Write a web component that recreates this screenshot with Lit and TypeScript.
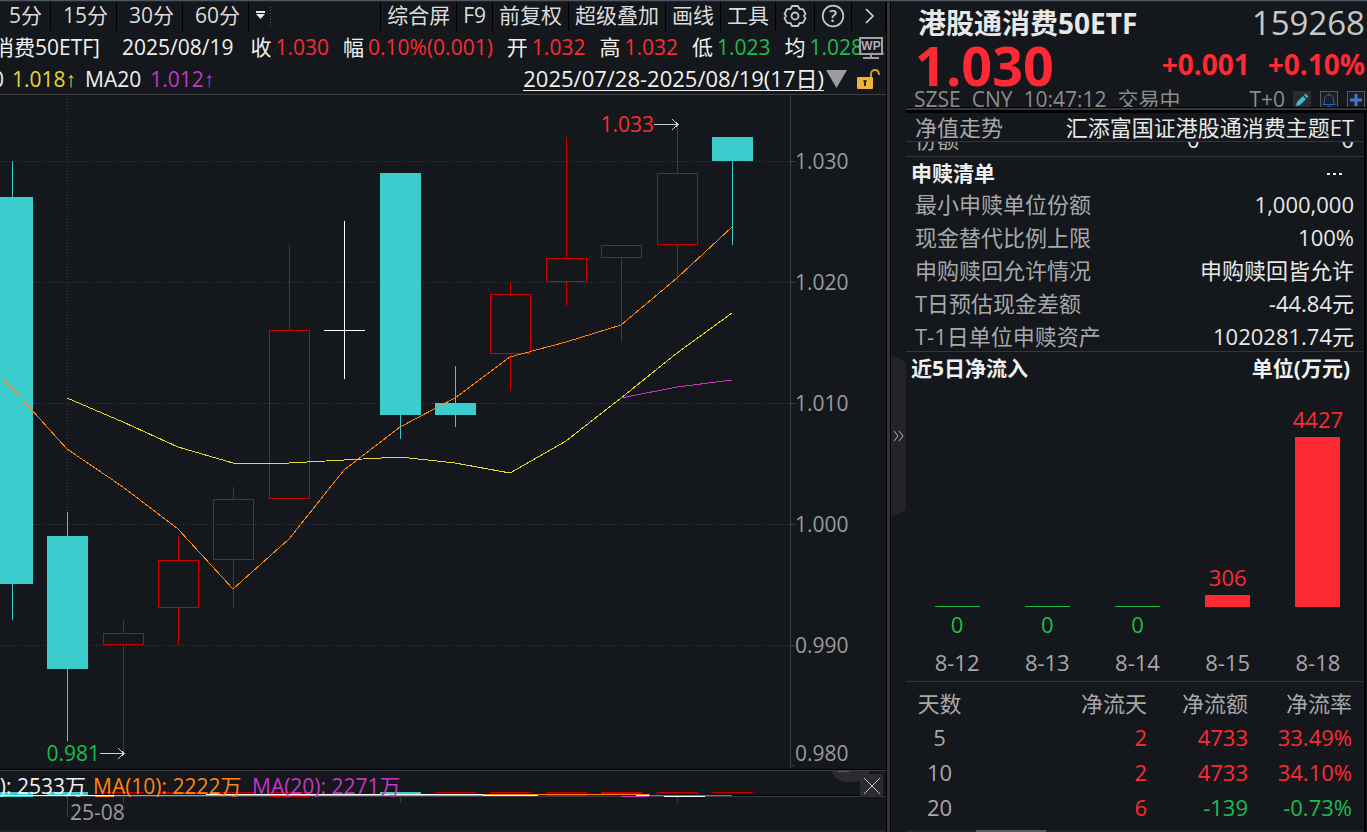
import { LitElement, html, svg, css } from "lit";
import { customElement } from "lit/decorators.js";
import { classMap } from "lit/directives/class-map.js";
import { styleMap } from "lit/directives/style-map.js";

type Kind = "up" | "down" | "flat";
interface Candle {
  x: number;
  high: number;
  low: number;
  top: number;
  bottom: number;
  kind: Kind;
}

const CANDLES: Candle[] = [
  { x: 12, high: 161, low: 620, top: 197, bottom: 584, kind: "down" },
  { x: 67, high: 512, low: 741, top: 536, bottom: 669, kind: "down" },
  { x: 123, high: 620, low: 753, top: 633, bottom: 645, kind: "up" },
  { x: 178, high: 536, low: 645, top: 560, bottom: 608, kind: "up" },
  { x: 233, high: 487, low: 608, top: 499, bottom: 560, kind: "up" },
  { x: 289, high: 245, low: 499, top: 330, bottom: 499, kind: "up" },
  { x: 344, high: 221, low: 379, top: 330, bottom: 331, kind: "flat" },
  { x: 400, high: 173, low: 439, top: 173, bottom: 415, kind: "down" },
  { x: 455, high: 366, low: 427, top: 403, bottom: 415, kind: "down" },
  { x: 510, high: 282, low: 391, top: 294, bottom: 354, kind: "up" },
  { x: 566, high: 137, low: 306, top: 258, bottom: 282, kind: "up" },
  { x: 621, high: 245, low: 342, top: 245, bottom: 258, kind: "up" },
  { x: 677, high: 124, low: 282, top: 173, bottom: 245, kind: "up" },
  { x: 732, high: 137, low: 245, top: 137, bottom: 161, kind: "down" },
];

const MA5 =
  "3,379 12,388 67,449 123,487 178,529 233,589 289,539 344,470 400,427 455,398 510,357 566,342 621,325 677,278 732,227";
const MA10 =
  "67,398 123,422 178,447 233,463 289,463 344,460 400,457 455,463 510,473 566,441 621,398 677,353 732,313";
const MA20 = "621,398 677,387 732,380";

const AXIS = [
  { label: "1.030", y: 161 },
  { label: "1.020", y: 282 },
  { label: "1.010", y: 403 },
  { label: "1.000", y: 524 },
  { label: "0.990", y: 645 },
];

@customElement("price-chart")
class PriceChart extends LitElement {
  static styles = css`
    :host { display: block; }
    svg { display: block; width: 100%; }
    text { font: 21px "Open Sans", "Noto Sans CJK SC", sans-serif; }
    .axis-text { fill: #9a9a9a; }
    .crisp { shape-rendering: crispEdges; }
    .grid { stroke: #3a3b3f; stroke-dasharray: 1 2; }
    .axis { stroke: #3d3d42; }
    .up { stroke: #cc0000; fill: none; }
    .down { stroke: #3bcccd; fill: #3bcccd; }
    .flat { stroke: #ffffff; fill: none; }
    .line { fill: none; }
    .ma5 { stroke: #ff860a; }
    .ma10 { stroke: #e6d92e; }
    .ma20 { stroke: #c436c4; }
    .arrow { stroke: #d0d0d0; fill: none; }
    .high { fill: #fe2a33; }
    .low { fill: #1cbd4e; }
  `;

  private candle(c: Candle) {
    const cx = c.x + 0.5;
    const body =
      c.kind === "flat"
        ? svg`<path class="flat" d="M${c.x - 20} ${c.top + 0.5}h41"></path>`
        : svg`<rect class=${c.kind} x=${c.x - 19.5} y=${c.top + 0.5} width="40" height=${c.bottom - c.top - 1}></rect>`;
    return svg`<path class=${c.kind} d="M${cx} ${c.high}V${c.top}M${cx} ${c.bottom}V${c.low}"></path>${body}`;
  }

  render() {
    return html`<svg viewBox="0 95 886 674" role="img" aria-label="K线">
      <g class="crisp">
        ${AXIS.map((a) => svg`<path class="grid" d="M0 ${a.y + 0.5}H790"></path><path class="axis" d="M790 ${a.y + 0.5}h5"></path>`)}
        <path class="grid" d="M67.5 96V768"></path>
        <path class="axis" d="M790.5 95V768M790 765.5h5"></path>
        ${CANDLES.map((c) => this.candle(c))}
        <polyline class="line ma5" points=${MA5}></polyline>
        <polyline class="line ma10" points=${MA10}></polyline>
        <polyline class="line ma20" points=${MA20}></polyline>
        <path class="arrow" d="M654 124.5H678M672 119L678 124.5L672 130"></path>
        <path class="arrow" d="M100 753.5H124M118 748L124 753.5L118 759"></path>
      </g>
      ${AXIS.map((a) => svg`<text class="axis-text" x="795" y=${a.y + 8}>${a.label}</text>`)}
      <text class="axis-text" x="795" y="761">0.980</text>
      <text class="high" x="654" y="132" text-anchor="end">1.033</text>
      <text class="low" x="100" y="761" text-anchor="end">0.981</text>
    </svg>`;
  }
}

const VOLUME_TOPS = [103, 158, 213, 269, 435, 490, 546, 601, 657, 712];

@customElement("volume-chart")
class VolumeChart extends LitElement {
  static styles = css`
    :host { display: block; position: relative; }
    svg { display: block; width: 100%; }
    text { font: 21px "Open Sans", "Noto Sans CJK SC", sans-serif; }
    .crisp { shape-rendering: crispEdges; }
    .line { fill: none; }
    .border { stroke: #3d3d42; }
    .black { stroke: #000000; }
    .red { stroke: #cc0000; }
    .cyan { fill: #3bcccd; }
    .white { stroke: #ffffff; }
    .orange { stroke: #ff860a; }
    .purple { stroke: #c436c4; }
    .bubble { fill: #2b2c31; }
    .teal { stroke: #2c6b70; }
    .t-white { fill: #f0f0f0; }
    .t-orange { fill: #ff860a; }
    .t-purple { fill: #c436c4; }
    .t-gray { fill: #9a9a9a; }
    .close {
      position: absolute;
      right: 3px;
      top: 5px;
      width: 23px;
      height: 23px;
      padding: 0;
      border: 0;
      border-radius: 2px;
      background: #2b2b30;
    }
    .cross { stroke: #c4c4c4; fill: none; }
  `;

  render() {
    return html`<svg viewBox="0 769 886 60" role="img" aria-label="成交量">
        <g class="crisp">
          <path class="line black" d="M0 769.5H887"></path>
          <path class="line border" d="M0 770.5H887"></path>
        </g>
        <path class="bubble" d="M831 771H870C866 779 859 782 850 782S835 779 831 771Z"></path>
        <g class="crisp">
          <path class="line teal" d="M838 771.5H849"></path>
          <path class="line black" d="M649 795.5H887"></path>
          <path class="line border" d="M0 796.5H887"></path>
          <path class="line border" d="M67.5 797V817M123.5 797V803M400.5 797V803M677.5 797V803"></path>
          <path class="cyan" d="M0 792H33V797H0ZM47 792H88V795H47ZM380 792H421V794H380Z"></path>
          ${VOLUME_TOPS.map((x) => svg`<path class="line red" d="M${x} 792.5h41"></path>`)}
          <path class="line red" d="M601 793.5H642M158 793.5H199M269 796.5H310M546 795.5H587M657.5 792V797M697.5 792V795"></path>
          <path class="line white" d="M0 795.5H114M206 794.5H483M483 795.5H538M664 796.5H705"></path>
          <path class="line orange" d="M95 796.5H114M114 795.5H483M483 794.5H650"></path>
          <path class="line purple" d="M621 796.5H649M649 795.5H732"></path>
          <path class="line white" d="M636 795.5H649"></path>
        </g>
        <text class="t-white" x="86" y="794" text-anchor="end">): 2533万</text>
        <text class="t-orange" x="93" y="794">MA(10): 2222万</text>
        <text class="t-purple" x="252" y="794">MA(20): 2271万</text>
        <text class="t-gray" x="70" y="820">25-08</text>
      </svg>
      <button class="close" aria-label="关闭">
        <svg viewBox="0 0 23 23"><path class="cross" d="M4 4L20 20M20 4L4 20"></path></svg>
      </button>`;
  }
}

const FLOWS = [
  { day: "8-12", value: 0 },
  { day: "8-13", value: 0 },
  { day: "8-14", value: 0 },
  { day: "8-15", value: 306 },
  { day: "8-18", value: 4427 },
];

const DETAILS = [
  ["最小申赎单位份额", "1,000,000"],
  ["现金替代比例上限", "100%"],
  ["申购赎回允许情况", "申购赎回皆允许"],
  ["T日预估现金差额", "-44.84元"],
  ["T-1日单位申赎资产", "1020281.74元"],
];

const SUMMARY = [
  { days: "5", count: "2", amount: "4733", rate: "33.49%" },
  { days: "10", count: "2", amount: "4733", rate: "34.10%" },
  { days: "20", count: "6", amount: "-139", rate: "-0.73%" },
];

@customElement("quote-panel")
class QuotePanel extends LitElement {
  static styles = css`
    :host {
      display: flex;
      flex-direction: column;
      font-size: 22px;
      color: #a8a8a8;
    }
    .header { padding: 2px 2px 0 8px; }
    .line-one, .line-two, .line-three {
      display: flex;
      justify-content: space-between;
      align-items: center;
      white-space: nowrap;
    }
    .line-one { height: 36px; padding-left: 4px; }
    .name { font-size: 28px; font-weight: 700; color: #e8e8e8; margin: 0; }
    .code { font-size: 33px; color: #c8c8c8; }
    .line-two { height: 47px; padding: 2px 0 0 1px; color: #fe2a33; font-weight: 700; }
    .price { font-size: 54px; line-height: 47px; }
    .change { display: flex; gap: 18px; font-size: 28px; padding-bottom: 3px; }
    .line-three { height: 21px; font-size: 21px; line-height: 21px; color: #8c8c8c; }
    .status { display: flex; gap: 11px; }
    .tools { display: flex; align-items: center; gap: 9px; }
    .settle { margin-right: -1px; }
    .tool { width: 18px; height: 18px; padding: 0; border: 0; background: #2b2b30; display: block; }
    .tool svg { display: block; }
    .rule { height: 2px; background: #35353a; border-bottom: 3px solid #000; border-top: 1px solid #000; margin-top: -3px; }
    .row {
      display: flex;
      justify-content: space-between;
      line-height: 33px;
      padding: 0 10px 0 9px;
      white-space: nowrap;
    }
    .body { border-right: 2px solid #000; margin-right: 1px; flex: 1; }
    .value { color: #e8e8e8; margin: 0; }
    .tab { line-height: 28px; height: 28px; border-bottom: 1px solid #35353a; }
    .cut { height: 14px; overflow: hidden; align-items: flex-end; border-bottom: 1px solid #35353a; }
    .cut .value { display: flex; justify-content: space-between; width: 167px; }
    .heading {
      display: flex;
      justify-content: space-between;
      align-items: center;
      padding: 2px 14px 0 5px;
      color: #f0f0f0;
      font-size: 21px;
      font-weight: 700;
      line-height: 29px;
    }
    .heading h2 { font-size: 21px; margin: 0; }
    .more { border: 0; background: none; padding: 0 7px 0 0; font: inherit; color: inherit; display: flex; gap: 1px; }
    .more i { width: 3px; height: 2px; background: #e8e8e8; margin: 1px; }
    .details { margin: 0; height: 163px; border-bottom: 1px solid #35353a; }
    .details dt, .details dd { margin: 0; }
    .flows { display: grid; grid-template-columns: repeat(5, 1fr); padding: 0 1px 0 6px; height: 298px; border-bottom: 1px solid #35353a; }
    .flow { display: flex; flex-direction: column; align-items: center; line-height: 36px; }
    .stack { height: 224px; display: flex; flex-direction: column; justify-content: flex-end; align-items: center; }
    .bar { width: 45px; background: #fe2a33; }
    .zero { width: 45px; height: 1px; background: #19bc4c; }
    .below { height: 37px; line-height: 34px; }
    .up { color: #fe2a33; }
    .down { color: #1cbd4e; }
    table { width: 100%; border-collapse: collapse; table-layout: fixed; line-height: 35px; margin-top: 4px; }
    thead { line-height: 34px; }
    th { font-weight: 400; }
    th, td { padding: 0 12px 0 0; text-align: right; white-space: nowrap; }
    th:first-child, td:first-child { text-align: center; padding: 0; }
    th:first-child { width: 67px; }
    th:nth-child(3) { width: 89px; }
    th:nth-child(4) { width: 92px; }
    .scroll { height: 2px; background: #242429; border-right: 2px solid #000; margin-right: 1px; }
    .thumb { width: 70px; height: 2px; margin-left: 70px; background: #5b5a63; }
  `;

  private flow(f: { day: string; value: number }) {
    const up = f.value > 0;
    return html`<div class="flow">
      <div class="stack">
        ${up
          ? html`<span class="up">${f.value}</span>
              <div class="bar" style=${styleMap({ height: `${Math.round((f.value / 4427) * 170)}px` })}></div>`
          : html`<div class="zero"></div>`}
      </div>
      <div class="below down">${up ? "" : f.value}</div>
      <div>${f.day}</div>
    </div>`;
  }

  render() {
    return html`
      <div class="header">
        <div class="line-one"><h1 class="name">港股通消费50ETF</h1><span class="code">159268</span></div>
        <div class="line-two">
          <span class="price">1.030</span>
          <span class="change"><span>+0.001</span><span>+0.10%</span></span>
        </div>
        <div class="line-three">
          <span class="status"><span>SZSE</span><span>CNY</span><span>10:47:12</span><span>交易中</span></span>
          <span class="tools">
            <span class="settle">T+0</span>
            <button class="tool" aria-label="编辑">
              <svg width="18" height="18" viewBox="0 0 18 18">
                <path fill="#35c2d6" d="M3 15L4 11L10 5L13 8L7 14ZM11 4L12.500 2.500L15.500 5.500L14 7Z"></path>
              </svg>
            </button>
            <button class="tool" aria-label="提醒">
              <svg width="18" height="18" viewBox="0 0 18 18" fill="none">
                <rect x=".5" y=".5" width="17" height="17" fill="#1d1e23" stroke="#5a5a5f"></rect>
                <path stroke="#2f62ad" d="M3 13.500H15C13.500 12 13.500 11 13.500 8.500C13.500 5.500 11.500 4 9 4S4.500 5.500 4.500 8.500C4.500 11 4.500 12 3 13.500ZM9 2V4M7 15.500H11"></path>
              </svg>
            </button>
            <button class="tool" aria-label="添加">
              <svg width="18" height="18" viewBox="0 0 18 18">
                <rect x=".5" y=".5" width="17" height="17" fill="#1d1e23" stroke="#5a5a5f"></rect>
                <path stroke="#3f78c9" stroke-width="3" d="M9 3V15M3 9H15"></path>
              </svg>
            </button>
          </span>
        </div>
      </div>
      <div class="rule"></div>
      <div class="body">
        <div class="row tab"><span>净值走势</span><span class="value">汇添富国证港股通消费主题ET</span></div>
        <div class="row cut"><span>份额</span><span class="value"><span>0</span><span>0</span></span></div>
        <div class="heading">
          <h2>申赎清单</h2>
          <button class="more" aria-label="更多"><i></i><i></i><i></i></button>
        </div>
        <dl class="details">
          ${DETAILS.map(([k, v]) => html`<div class="row"><dt>${k}</dt><dd class="value">${v}</dd></div>`)}
        </dl>
        <div class="heading"><h2>近5日净流入</h2><span>单位(万元)</span></div>
        <div class="flows">${FLOWS.map((f) => this.flow(f))}</div>
        <table>
          <thead><tr><th>天数</th><th>净流天</th><th>净流额</th><th>净流率</th></tr></thead>
          <tbody>
            ${SUMMARY.map((s) => {
              const tone = classMap({ up: !s.amount.startsWith("-"), down: s.amount.startsWith("-") });
              return html`<tr><td>${s.days}</td><td class="up">${s.count}</td><td class=${tone}>${s.amount}</td><td class=${tone}>${s.rate}</td></tr>`;
            })}
          </tbody>
        </table>
      </div>
      <div class="scroll"><div class="thumb"></div></div>
    `;
  }
}

const QUOTES = [
  { label: "收", value: "1.030", tone: "up" },
  { label: "幅", value: "0.10%(0.001)", tone: "up" },
  { label: "开", value: "1.032", tone: "up" },
  { label: "高", value: "1.032", tone: "up" },
  { label: "低", value: "1.023", tone: "down" },
  { label: "均", value: "1.028", tone: "down" },
];

@customElement("app-root")
class AppRoot extends LitElement {
  static styles = css`
    :host {
      display: flex;
      flex-direction: column;
      min-height: 100vh;
      background: #14171b;
      color: #f0f0f0;
      font-family: "Open Sans", "Noto Sans CJK SC", sans-serif;
      font-size: 21px;
      overflow: hidden;
    }
    button { font: inherit; color: inherit; background: none; border: 0; }
    .strip { height: 1px; background: #4d555e; border-bottom: 1px solid #22262b; }
    .layout { flex: 1; display: grid; grid-template-columns: minmax(0, 1fr) 4px 15px 461px; }
    .left { display: flex; flex-direction: column; border-right: 1px solid #000; }
    .divider { background: #333338; border-right: 1px solid #000; }
    .handle { display: flex; align-items: flex-start; }
    .handle button { padding: 0; margin-top: 353px; }
    .handle svg { display: block; }
    .toolbar { display: flex; justify-content: space-between; height: 29px; color: #dcdcdc; }
    .group { display: flex; }
    .group button { border-right: 1px solid #000; padding: 0 6px 2px; line-height: 27px; white-space: nowrap; display: flex; align-items: center; }
    .periods { margin-left: -3px; }
    .periods button { padding: 0 8px 2px 12px; }
    .periods .drop { padding: 0 6px; border: 0; }
    .functions button:first-child { border-left: 1px solid #000; }
    .help-mark { font: 600 17px "Open Sans", sans-serif; fill: #c8c8c8; stroke: none; }
    .info { position: relative; display: flex; gap: 14px; height: 32px; line-height: 32px; white-space: nowrap; overflow: hidden; }
    .info > * { flex: none; }
    .title { width: 100px; margin-right: 8px; display: flex; justify-content: flex-end; overflow: hidden; }
    .date { margin-right: 3px; }
    .quote { display: flex; gap: 4px; }
    .rest { margin-left: -8px; }
    .up { color: #fe2a33; }
    .down { color: #1cbd4e; }
    .badge { position: absolute; right: 2px; top: 5px; }
    .badge-text { font: 700 12px "Liberation Sans", sans-serif; fill: #b0b0b3; stroke: none; }
    .averages { display: flex; justify-content: space-between; height: 31px; line-height: 33px; white-space: nowrap; border-bottom: 1px solid #3d3d42; }
    .ma { display: flex; gap: 9px; }
    .edge { width: 4px; margin-right: -1px; display: flex; justify-content: flex-end; overflow: hidden; }
    .trend { font-family: "Liberation Sans", sans-serif; }
    .yellow { color: #e6d92e; }
    .purple { color: #c436c4; }
    .range { display: flex; align-items: center; padding-right: 6px; font-size: 22px; }
    .range a { color: inherit; text-decoration: none; line-height: 24px; border-bottom: 1px solid #f0f0f0; }
    .range button { padding: 0 0 0 2px; display: block; }
    .range .lock { padding-left: 9px; }
    .range svg { display: block; }
    .footer { height: 2px; background: #242429; margin-top: auto; }
  `;

  render() {
    return html`
      <div class="strip"></div>
      <div class="layout">
        <main class="left">
          <div class="toolbar">
            <div class="group periods">
              <button>5分</button><button>15分</button><button>30分</button><button>60分</button>
              <button class="drop" aria-label="更多周期">
                <svg width="18" height="20" viewBox="0 0 18 20">
                  <path fill="#e4e6f0" d="M1 4H10V6H1ZM1 7H10L5.500 12Z"></path>
                  <path stroke="#5c5c60" stroke-dasharray="1 2" d="M15.500 0V20" shape-rendering="crispEdges"></path>
                </svg>
              </button>
            </div>
            <div class="group functions">
              <button>综合屏</button><button>F9</button><button>前复权</button><button>超级叠加</button><button>画线</button><button>工具</button>
              <button aria-label="设置">
                <svg width="26" height="24" viewBox="0 0 26 24" fill="none" stroke="#c8c8c8" stroke-width="1.800" stroke-linejoin="round">
                  <path d="M10 2H16L17.500 5L21 5.200L23.500 10L21.800 12L23.500 14L21 18.800L17.500 19L16 22H10L8.500 19L5 18.800L2.500 14L4.200 12L2.500 10L5 5.200L8.500 5Z"></path>
                  <circle cx="13" cy="12" r="3.500"></circle>
                </svg>
              </button>
              <button aria-label="帮助">
                <svg width="24" height="24" viewBox="0 0 24 24" fill="none" stroke="#c8c8c8" stroke-width="1.700">
                  <circle cx="12" cy="12" r="10.300"></circle>
                  <text class="help-mark" x="12" y="18" text-anchor="middle">?</text>
                </svg>
              </button>
              <button aria-label="展开">
                <svg width="21" height="20" viewBox="0 0 21 20" fill="none" stroke="#d8d8d8" stroke-width="1.600"><path d="M8 3L15 10L8 17"></path></svg>
              </button>
            </div>
          </div>
          <div class="info">
            <span class="title">消费50ETF]</span>
            <span class="date">2025/08/19</span>
            ${QUOTES.map((q) => html`<span class="quote"><span>${q.label}</span><span class=${q.tone}>${q.value}</span></span>`)}
            <span class="up rest">…</span>
            <svg class="badge" width="26" height="24" viewBox="0 0 26 24" fill="none" stroke="#a0a0a3">
              <rect x="2" y="2" width="22" height="16" fill="#14171b" fill-opacity="0.500" stroke-width="2"></rect>
              <path stroke-width="2" d="M13 18V22M5 22H21"></path>
              <text class="badge-text" x="13" y="14" text-anchor="middle">WP</text>
            </svg>
          </div>
          <div class="averages">
            <div class="ma">
              <span class="edge">0</span>
              <span class="yellow">1.018<span class="trend">↑</span></span>
              <span>MA20</span>
              <span class="purple">1.012<span class="trend">↑</span></span>
            </div>
            <div class="range">
              <a href="#range">2025/07/28-2025/08/19(17日)</a>
              <button aria-label="选择区间">
                <svg width="21" height="20" viewBox="0 0 21 20"><path fill="#9c9c9c" d="M0 1H21L10.500 19Z"></path></svg>
              </button>
              <button class="lock" aria-label="解锁">
                <svg width="24" height="22" viewBox="0 0 24 22" fill="none">
                  <rect x="1" y="9" width="16" height="12" rx="1" fill="#f0b43c"></rect>
                  <path stroke="#d9a02f" stroke-width="1.800" d="M15 9V6C15 3.500 16.500 2 19 2S23 3.500 23 7"></path>
                  <path stroke="#33260a" stroke-width="2" d="M9 12V18M7.500 13H10.500"></path>
                </svg>
              </button>
            </div>
          </div>
          <price-chart></price-chart>
          <volume-chart></volume-chart>
          <div class="footer"></div>
        </main>
        <div class="divider"></div>
        <div class="handle">
          <button aria-label="收起">
            <svg width="15" height="162" viewBox="0 0 15 162">
              <path fill="#242329" d="M0 0L15 7V155L0 162Z"></path>
              <path fill="none" stroke="#b8b8b8" d="M3 76L7 81L3 86M8 76L12 81L8 86"></path>
            </svg>
          </button>
        </div>
        <quote-panel></quote-panel>
      </div>
    `;
  }
}
